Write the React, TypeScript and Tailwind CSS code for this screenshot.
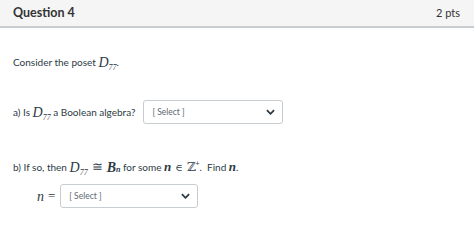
const Sub77 = () => (
  <span className="font-['Liberation_Serif',serif] italic">
    <span className="text-[14px]">D</span>
    <span className="text-[8px] relative top-[3px]">77</span>
  </span>
);

const Select = ({ width }: { width: string }) => (
  <div
    className={`${width} h-[24px] border border-[#c7cdd1] rounded-[3px] bg-white flex items-center justify-between pl-[8px] pr-[7px]`}
  >
    <span className="text-[8.5px] text-[#5b6770]">[ Select ]</span>
    <svg width="9" height="6" viewBox="0 0 10 6">
      <path d="M1 1 L5 5 L9 1" fill="none" stroke="#2d3b45" strokeWidth="2" />
    </svg>
  </div>
);

export default function App() {
  return (
    <div className="w-[474px] h-[250px] bg-white font-['Lato',sans-serif] text-[#2d3b45] overflow-hidden">
      <div className="h-[28px] bg-[#f5f5f5] border-b-2 border-[#c7cdd1] flex items-center justify-between pl-[13px] pr-[14px]">
        <span className="text-[12.5px] font-bold text-[#333]">Question 4</span>
        <span className="text-[11px] text-[#333]">2 pts</span>
      </div>
      <div className="pl-[13px] pt-[25px] text-[10px]">
        <div className="flex items-center h-[18px]">
          Consider the poset&nbsp;<Sub77 />.
        </div>
        <div className="flex items-center mt-[29px] h-[24px]">
          <span>a) Is&nbsp;</span>
          <Sub77 />
          <span>&nbsp;a Boolean algebra?</span>
          <div className="ml-[8px]">
            <Select width="w-[140px]" />
          </div>
        </div>
        <div className="flex items-center mt-[34px] h-[18px]">
          <span>b) If so, then&nbsp;</span>
          <Sub77 />
          <span className="font-['Liberation_Serif',serif] text-[13px] mx-[4px]">≅</span>
          <span className="font-['Liberation_Serif',serif] italic font-bold text-[14px]">B</span>
          <span className="font-['Liberation_Serif',serif] italic font-bold text-[8px] relative top-[3px]">n</span>
          <span>&nbsp;for some&nbsp;</span>
          <span className="font-['Liberation_Serif',serif] italic font-bold text-[13px]">n</span>
          <span className="font-['DejaVu_Serif',serif] text-[10px] mx-[4px]">∈</span>
          <span className="font-['DejaVu_Serif',serif] text-[12px]">ℤ</span>
          <span className="text-[7px] relative -top-[4px]">+</span>
          <span>.&nbsp;&nbsp;Find&nbsp;</span>
          <span className="font-['Liberation_Serif',serif] italic font-bold text-[13px]">n</span>
          <span>.</span>
        </div>
        <div className="flex items-center mt-[8px] h-[24px] pl-[24px]">
          <span className="font-['Liberation_Serif',serif] italic text-[14px]">n</span>
          <span className="font-['Liberation_Serif',serif] text-[13px] ml-[4px] mr-[5px]">=</span>
          <Select width="w-[138px]" />
        </div>
      </div>
    </div>
  );
}
